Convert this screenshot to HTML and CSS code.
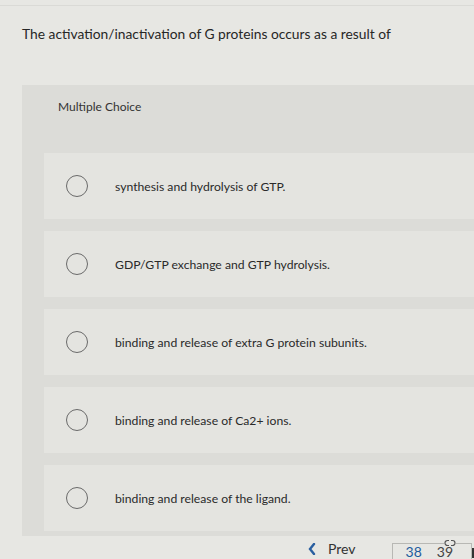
FILE: index.html
```html
<!DOCTYPE html>
<html>
<head>
<meta charset="utf-8">
<link rel="stylesheet" href="styles.css">
</head>
<body>
<div class="topline"></div>
<p class="question">The activation/inactivation of G proteins occurs as a result of</p>
<div class="panel">
  <div class="label">Multiple Choice</div>
  <div class="options">
    <div class="option"><span class="radio"></span><span class="text">synthesis and hydrolysis of GTP.</span></div>
    <div class="option"><span class="radio"></span><span class="text">GDP/GTP exchange and GTP hydrolysis.</span></div>
    <div class="option"><span class="radio"></span><span class="text">binding and release of extra G protein subunits.</span></div>
    <div class="option"><span class="radio"></span><span class="text">binding and release of Ca2+ ions.</span></div>
    <div class="option"><span class="radio"></span><span class="text">binding and release of the ligand.</span></div>
  </div>
</div>
<div class="nav">
  <div class="prev"><svg class="chev" width="8" height="12" viewBox="0 0 8 12"><path d="M6 1 L2 6 L6 11" fill="none" stroke="#2a5fa0" stroke-width="2.4" stroke-linecap="round"/></svg><span>Prev</span></div>
  <div class="pages">
    <svg class="link" width="12" height="8" viewBox="0 0 12 8"><path d="M5 1.5 H3.5 a2.5 2.5 0 0 0 0 5 H5 M7 1.5 H8.5 a2.5 2.5 0 0 1 0 5 H7" fill="none" stroke="#555" stroke-width="1.2"/></svg>
    <span class="cur">38</span><span class="pg">39</span>
  </div>
  <div class="edge"></div>
</div>
</body>
</html>
```
FILE: styles.css
```css
html, body {
  margin: 0;
  padding: 0;
}
body {
  width: 474px;
  height: 559px;
  overflow: hidden;
  background: #e7e7e3;
  font-family: Lato, "Open Sans", sans-serif;
  color: #2e2e2e;
}
.topline {
  height: 1px;
  margin-top: 5px;
  background: #dadad6;
}
.question {
  margin: 19px 0 0 22px;
  font-size: 13.8px;
  line-height: 18px;
  color: #262626;
}
.panel {
  margin: 42px 0 0 22px;
  background: #dcdcd8;
  padding: 14px 0 5px 22px;
}
.label {
  margin-left: 14px;
  font-size: 12px;
  line-height: 16px;
  color: #333;
}
.options {
  margin-top: 38px;
  display: flex;
  flex-direction: column;
  gap: 12px;
}
.option {
  height: 66px;
  background: #e4e4e0;
  display: flex;
  align-items: center;
  padding-left: 22px;
}
.radio {
  width: 20px;
  height: 20px;
  border: 1.5px solid #6a6a6a;
  border-radius: 50%;
  flex: none;
}
.text {
  margin-left: 27px;
  font-size: 12.2px;
  color: #2a2a2a;
}
.nav {
  margin-top: 4px;
  height: 20px;
  display: flex;
  align-items: flex-start;
  padding-left: 308px;
}
.prev {
  display: flex;
  align-items: center;
  gap: 12px;
  margin-top: 2px;
  font-size: 14px;
  line-height: 14px;
  color: #333;
}
.pages {
  position: relative;
  margin-left: 36px;
  margin-top: 3px;
  width: 80px;
  height: 17px;
  border: 1px solid #b8b8b4;
  border-bottom: none;
  display: flex;
  align-items: flex-start;
  font-size: 14px;
  line-height: 14px;
}
.link {
  position: absolute;
  left: 51px;
  top: -5px;
  background: #e7e7e3;
}
.cur {
  margin-left: 13px;
  margin-top: 1px;
  color: #1f5d9e;
}
.pg {
  margin-left: 15px;
  margin-top: 1px;
  color: #444;
}
.edge {
  margin-left: auto;
  margin-top: 8px;
  width: 2px;
  height: 10px;
  background: #333;
}
```
